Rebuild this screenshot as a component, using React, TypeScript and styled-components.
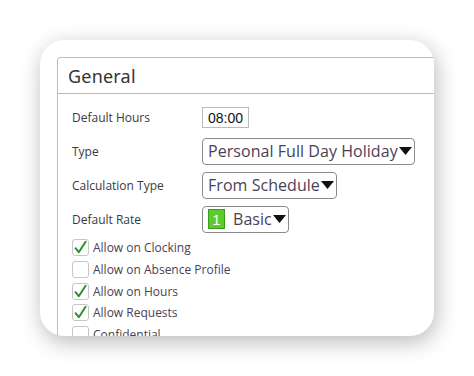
import React from 'react';
import styled, { createGlobalStyle } from 'styled-components';

const GlobalStyle = createGlobalStyle`
  html, body { margin: 0; padding: 0; background: #fff; }
  body { width: 474px; height: 376px; overflow: hidden; font-family: "Open Sans", "Liberation Sans", sans-serif; }
`;

interface Flag {
  label: string;
  checked: boolean;
}

const flags: Flag[] = [
  { label: 'Allow on Clocking', checked: true },
  { label: 'Allow on Absence Profile', checked: false },
  { label: 'Allow on Hours', checked: true },
  { label: 'Allow Requests', checked: true },
  { label: 'Confidential', checked: false },
];

const Check = () => (
  <svg width="15" height="15" viewBox="0 0 15 15">
    <path d="M2.5 8.2 L5.8 12.2 L12.6 1.8" fill="none" stroke="#2f8f2f" strokeWidth="2" strokeLinecap="round" strokeLinejoin="round" />
  </svg>
);

const Caret = () => (
  <svg width="13" height="8" viewBox="0 0 13 8">
    <path d="M0 0 H13 L6.5 8 Z" fill="#111" />
  </svg>
);

const App = () => {
  return (
    <Page>
      <GlobalStyle />
      <Card>
        <Panel>
          <Header>General</Header>
          <Body>
            <Grid>
              <Label>Default Hours</Label>
              <Field><TimeBox>08:00</TimeBox></Field>
              <Label>Type</Label>
              <Field><Select>Personal Full Day Holiday<Caret /></Select></Field>
              <Label>Calculation Type</Label>
              <Field><Select>From Schedule<Caret /></Select></Field>
              <Label>Default Rate</Label>
              <Field>
                <Select>
                  <RateBadge>1</RateBadge>
                  Basic<Caret />
                </Select>
              </Field>
            </Grid>
            <Flags>
              {flags.map((f) => (
                <FlagRow key={f.label}>
                  <Box>{f.checked && <Check />}</Box>
                  {f.label}
                </FlagRow>
              ))}
            </Flags>
          </Body>
        </Panel>
      </Card>
    </Page>
  );
};

export default App;

const Page = styled.div`
  padding: 40px;
`;

const Card = styled.div`
  width: 394px;
  height: 296px;
  background: #fff;
  border-radius: 24px;
  box-shadow: 2px 6px 22px rgba(0, 0, 0, 0.28);
  overflow: hidden;
  padding: 17px 0 0 17px;
  box-sizing: border-box;
`;

const Panel = styled.div`
  width: 420px;
  border: 1px solid #bdbdbd;
  border-radius: 3px 0 0 0;
  height: 400px;
`;

const Header = styled.div`
  height: 35px;
  border-bottom: 1px solid #b8b8b8;
  padding-left: 10px;
  display: flex;
  align-items: center;
  font-family: "Noto Sans", "Open Sans", sans-serif;
  font-size: 18px;
  font-weight: 400;
  letter-spacing: 0.2px;
  color: #333;
`;

const Body = styled.div`
  padding: 7px 0 0 14px;
`;

const Grid = styled.div`
  display: grid;
  grid-template-columns: 130px auto;
  grid-template-rows: 33px 34px 34px 34px;
`;

const Label = styled.div`
  display: flex;
  align-items: center;
  font-size: 12px;
  color: #3a3a3a;
`;

const Field = styled.div`
  display: flex;
  align-items: center;
`;

const TimeBox = styled.div`
  height: 21px;
  width: 47px;
  box-sizing: border-box;
  border: 1px solid #bbb;
  font-family: "Liberation Sans", Arial, sans-serif;
  font-size: 14px;
  color: #111;
  display: flex;
  align-items: center;
  justify-content: center;
`;

const Select = styled.div`
  height: 27px;
  box-sizing: border-box;
  border: 1px solid #8a8a8a;
  border-radius: 4px;
  padding: 0 2px 0 5px;
  display: flex;
  align-items: center;
  font-size: 16px;
  letter-spacing: 0.05px;
  color: #4a3f55;
  white-space: nowrap;
  svg { margin-left: 1px; }
`;

const RateBadge = styled.span`
  background: #5ccc2c;
  color: #fff;
  border: 1px solid #3d9a1a;
  width: 15px;
  height: 18px;
  display: inline-flex;
  align-items: center;
  justify-content: center;
  font-family: "Liberation Sans", Arial, sans-serif;
  font-size: 15px;
  margin-right: 8px;
`;

const Flags = styled.div`
  display: flex;
  flex-direction: column;
  margin-top: 1px;
`;

const FlagRow = styled.div`
  height: 21.7px;
  display: flex;
  align-items: center;
  font-size: 12px;
  color: #4a3f55;
`;

const Box = styled.span`
  width: 17px;
  height: 17px;
  box-sizing: border-box;
  border: 1px solid #c6c6c6;
  border-radius: 3px;
  margin-right: 4px;
  display: inline-flex;
  align-items: center;
  justify-content: center;
`;
